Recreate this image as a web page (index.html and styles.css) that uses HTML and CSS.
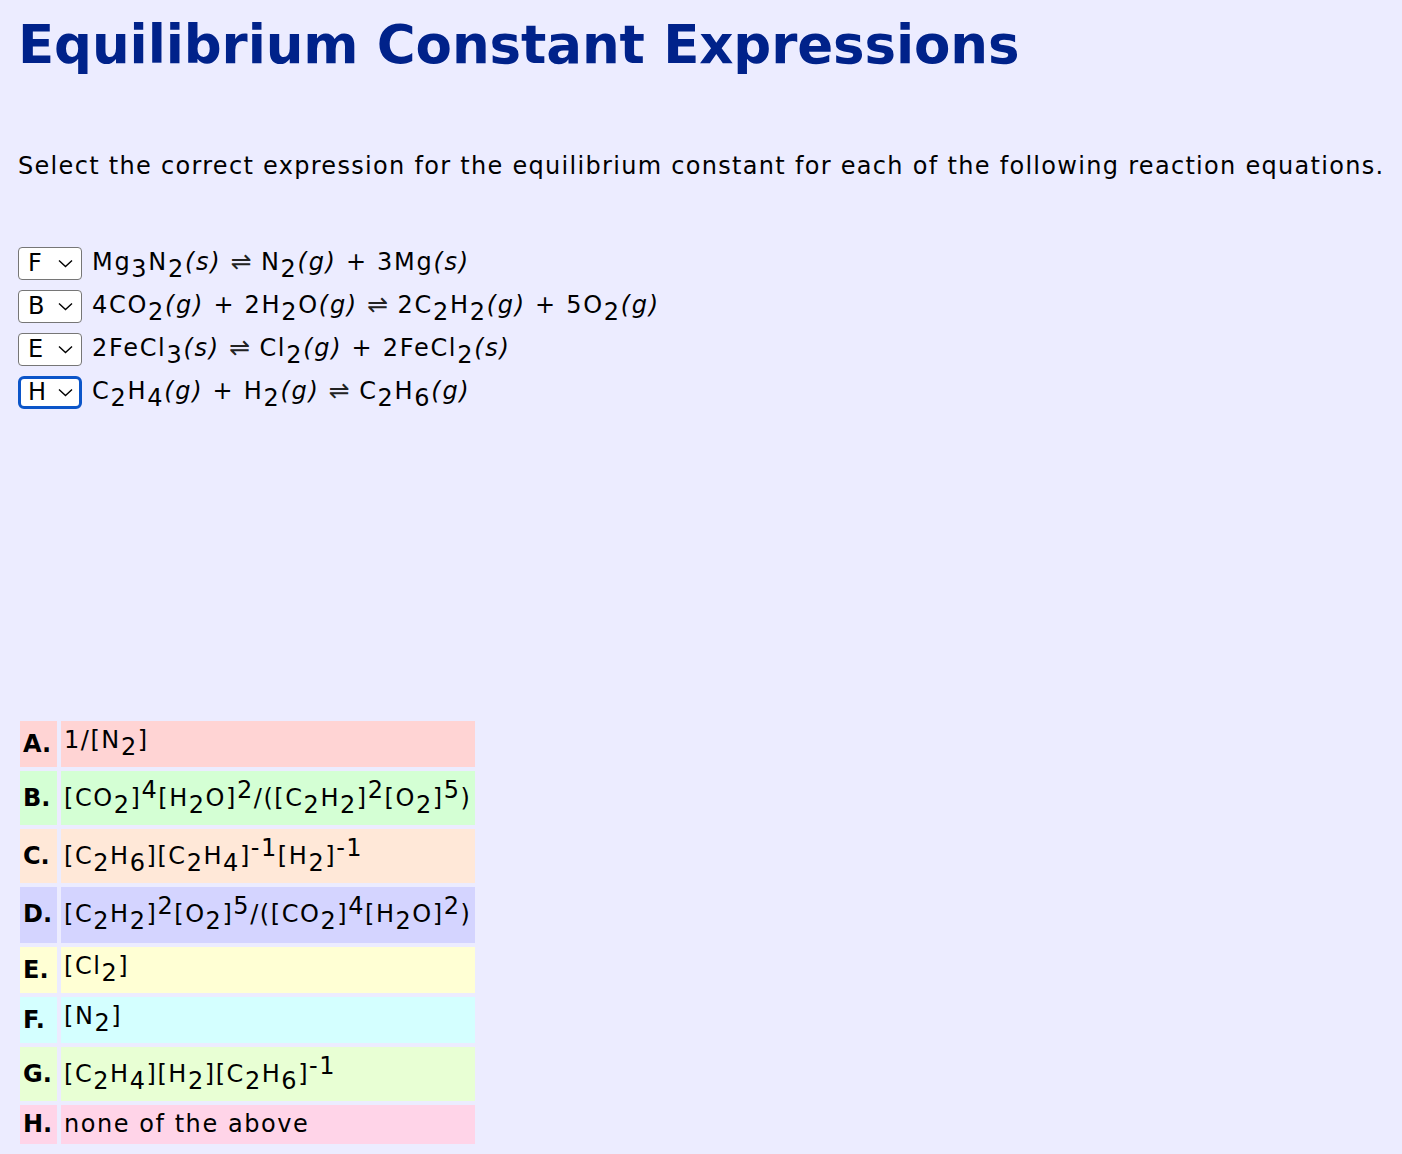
FILE: index.html
```html
<!DOCTYPE html>
<html lang="en">
<head>
<meta charset="UTF-8">
<meta name="viewport" content="width=device-width, initial-scale=1.0">
<title>Equilibrium Constant Expressions</title>
<link rel="stylesheet" href="styles.css">
</head>
<body>
<h1>Equilibrium Constant Expressions</h1>

<p class="intro">Select the correct expression for the equilibrium constant for each of the following reaction equations.</p>

<div class="questions">
  <div class="question">
    <div class="pick">F <svg viewBox="0 0 15 9"><path d="M1 1.5 L7.5 7.5 L14 1.5"/></svg></div>
    <span class="eq">Mg<sub>3</sub>N<sub>2</sub><i>(s)</i> <span class="arrow">&#8652;</span> N<sub>2</sub><i>(g)</i> + 3Mg<i>(s)</i></span>
  </div>
  <div class="question">
    <div class="pick">B <svg viewBox="0 0 15 9"><path d="M1 1.5 L7.5 7.5 L14 1.5"/></svg></div>
    <span class="eq">4CO<sub>2</sub><i>(g)</i> + 2H<sub>2</sub>O<i>(g)</i> <span class="arrow">&#8652;</span> 2C<sub>2</sub>H<sub>2</sub><i>(g)</i> + 5O<sub>2</sub><i>(g)</i></span>
  </div>
  <div class="question">
    <div class="pick">E <svg viewBox="0 0 15 9"><path d="M1 1.5 L7.5 7.5 L14 1.5"/></svg></div>
    <span class="eq">2FeCl<sub>3</sub><i>(s)</i> <span class="arrow">&#8652;</span> Cl<sub>2</sub><i>(g)</i> + 2FeCl<sub>2</sub><i>(s)</i></span>
  </div>
  <div class="question">
    <div class="pick focused">H <svg viewBox="0 0 15 9"><path d="M1 1.5 L7.5 7.5 L14 1.5"/></svg></div>
    <span class="eq">C<sub>2</sub>H<sub>4</sub><i>(g)</i> + H<sub>2</sub><i>(g)</i> <span class="arrow">&#8652;</span> C<sub>2</sub>H<sub>6</sub><i>(g)</i></span>
  </div>
</div>

<table class="choices">
  <tr class="c-a">
    <td class="label">A.</td>
    <td>1/[N<sub>2</sub>]</td>
  </tr>
  <tr class="c-b">
    <td class="label">B.</td>
    <td>[CO<sub>2</sub>]<sup>4</sup>[H<sub>2</sub>O]<sup>2</sup>/([C<sub>2</sub>H<sub>2</sub>]<sup>2</sup>[O<sub>2</sub>]<sup>5</sup>)</td>
  </tr>
  <tr class="c-c">
    <td class="label">C.</td>
    <td>[C<sub>2</sub>H<sub>6</sub>][C<sub>2</sub>H<sub>4</sub>]<sup>-1</sup>[H<sub>2</sub>]<sup>-1</sup></td>
  </tr>
  <tr class="c-d">
    <td class="label">D.</td>
    <td>[C<sub>2</sub>H<sub>2</sub>]<sup>2</sup>[O<sub>2</sub>]<sup>5</sup>/([CO<sub>2</sub>]<sup>4</sup>[H<sub>2</sub>O]<sup>2</sup>)</td>
  </tr>
  <tr class="c-e">
    <td class="label">E.</td>
    <td>[Cl<sub>2</sub>]</td>
  </tr>
  <tr class="c-f">
    <td class="label">F.</td>
    <td>[N<sub>2</sub>]</td>
  </tr>
  <tr class="c-g">
    <td class="label">G.</td>
    <td>[C<sub>2</sub>H<sub>4</sub>][H<sub>2</sub>][C<sub>2</sub>H<sub>6</sub>]<sup>-1</sup></td>
  </tr>
  <tr class="c-h">
    <td class="label">H.</td>
    <td>none of the above</td>
  </tr>
</table>
</body>
</html>
```

FILE: styles.css
```css
body {
  font-family: "DejaVu Sans", Verdana, sans-serif;
  font-size: 24px;
  letter-spacing: 1.25px;
  margin: 0;
  padding: 0 18px;
  background-color: #ececff;
  color: #000;
}
h1 {
  font-size: 53px;
  font-weight: bold;
  letter-spacing: -0.1px;
  color: #00228a;
  margin: 0;
  padding-top: 12px;
  line-height: 66px;
}
.intro {
  margin: 73px 0 0;
  line-height: 30px;
  white-space: nowrap;
  letter-spacing: 1.3px;
}
.questions {
  margin-top: 66px;
  display: flex;
  flex-direction: column;
  gap: 11px;
}
.question {
  display: flex;
  align-items: center;
  gap: 10px;
  height: 32px;
}
.pick {
  box-sizing: border-box;
  width: 64px;
  height: 33px;
  border: 1px solid #767676;
  border-radius: 4px;
  background: #fff;
  display: flex;
  align-items: center;
  justify-content: space-between;
  padding: 0 8px 0 9px;
  line-height: 1;
  letter-spacing: 0;
}
.pick svg {
  width: 15px;
  height: 9px;
  fill: none;
  stroke: #000;
  stroke-width: 1.4;
}
.pick.focused {
  border: 3px solid #0b55c9;
  border-radius: 6px;
  padding: 0 6px 0 7px;
}
.eq {
  white-space: nowrap;
  letter-spacing: 1.7px;
  padding-top: 4px;
}
.eq .arrow {
  font-size: 25px;
  letter-spacing: 0;
  color: #222;
}
/* indices stay at full size, just shifted */
sub, sup {
  font-size: 1em;
}
sub {
  vertical-align: -7px;
}
sup {
  vertical-align: 8px;
}
.choices {
  border-collapse: separate;
  border-spacing: 4px;
  margin: 309px 0 0 -2px;
  table-layout: fixed;
  width: 463px;
}
.choices td {
  padding: 5px 3px;
  line-height: 29px;
  white-space: nowrap;
  vertical-align: middle;
  letter-spacing: 1.55px;
}
.choices .label {
  width: 31px;
  font-weight: bold;
  letter-spacing: 0;
}
.choices .c-d td {
  padding-bottom: 7px;
}
.c-a td { background: #ffd4d4; }
.c-b td { background: #d4ffd4; }
.c-c td { background: #ffe8d8; }
.c-d td { background: #d4d4ff; }
.c-e td { background: #ffffd4; }
.c-f td { background: #d4ffff; }
.c-g td { background: #e8ffd4; }
.c-h td { background: #ffd4e8; }
```
